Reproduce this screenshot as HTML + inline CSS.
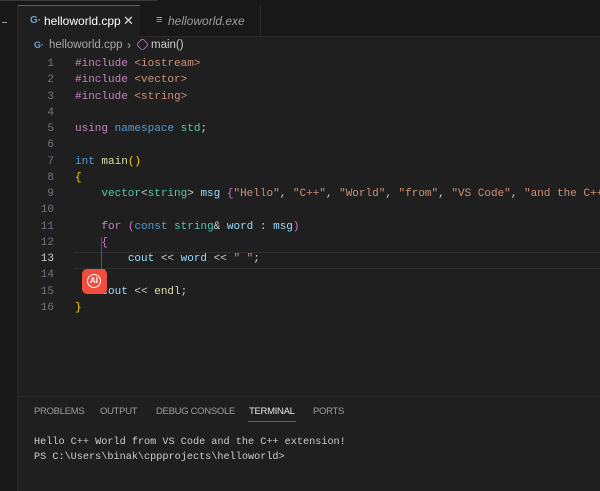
<!DOCTYPE html>
<html><head><style>
body{margin:0;width:600px;height:491px;background:#1f1f1f;overflow:hidden;position:relative;font-family:"Liberation Sans",sans-serif}
.abs{position:absolute}
.mono{font-family:"Liberation Mono","DejaVu Sans Mono",monospace;font-size:11px;white-space:pre}
.code{position:absolute;left:0;top:3px;width:600px;height:320px;overflow:hidden}
.ln{position:absolute;left:30px;width:24px;text-align:right;color:#6e7681}
.cd{position:absolute;left:75px;color:#cccccc}
.p{color:#c586c0}.s{color:#ce9178}.k{color:#569cd6}.t{color:#4ec9b0}.f{color:#dcdcaa}.v{color:#9cdcfe}.y{color:#ffd700}.pu{color:#da70d6}
.pt{position:absolute;top:406px;font-size:9.5px;letter-spacing:-0.3px;color:#9d9d9d}
</style></head><body>
<div class="abs" style="left:0;top:0;width:17px;height:491px;background:#181818;border-right:1px solid #2b2b2b"></div>
<div class="abs" style="left:2px;top:22px;width:5px;height:1px;background:#999"></div>
<div class="abs" style="left:0;top:0;width:600px;height:5px;background:#181818"></div>
<div class="abs" style="left:0;top:0;width:157px;height:1px;background:#3a3a3a"></div>
<div class="abs" style="left:18px;top:5px;width:582px;height:31px;background:#181818;border-bottom:1px solid #2b2b2b"></div>
<div class="abs" style="left:18px;top:5px;width:122px;height:32px;background:#1f1f1f;border-top:1px solid #0078d4;box-sizing:border-box"></div>
<div class="abs" style="left:140px;top:5px;width:120px;height:31px;border-right:1px solid #2b2b2b"></div>
<div class="abs" style="left:30px;top:15px;font-size:10px;color:#6c9fd4;font-weight:bold">G·</div>
<div class="abs" style="left:44px;top:14px;font-size:12px;color:#fff">helloworld.cpp</div>
<div class="abs" style="left:123px;top:13px;font-size:13px;color:#ddd">✕</div>
<div class="abs" style="left:156px;top:14px;font-size:11px;color:#aaa">≡</div>
<div class="abs" style="left:168px;top:14px;font-size:12px;color:#9d9d9d;font-style:italic">helloworld.exe</div>
<div class="abs" style="left:34px;top:40px;font-size:9px;color:#6c9fd4;font-weight:bold">G·</div>
<div class="abs" style="left:49px;top:39px;font-size:11.5px;color:#a9a9a9">helloworld.cpp</div>
<div class="abs" style="left:127px;top:38px;font-size:12px;color:#a9a9a9">›</div>
<div class="abs" style="left:137px;top:39px;width:11px;height:11px;border:1.5px solid #b180d7;border-radius:3px;box-sizing:border-box;transform:rotate(45deg) scale(.85)"></div>
<div class="abs" style="left:151px;top:39px;font-size:11.5px;color:#ccc">main()</div>
<div class="abs" style="left:74px;top:252px;width:526px;height:17px;border-top:1px solid #2e2e2e;border-bottom:1px solid #2e2e2e;box-sizing:border-box"></div>
<div class="abs" style="left:101px;top:237px;width:7px;height:46px;border-left:1px solid #555;box-sizing:border-box"></div>
<div class="mono code">
<div class="ln" style="top:55px">1</div><div class="cd" style="top:55px"><span class="p">#include</span> <span class="s">&lt;iostream&gt;</span></div>
<div class="ln" style="top:71px">2</div><div class="cd" style="top:71px"><span class="p">#include</span> <span class="s">&lt;vector&gt;</span></div>
<div class="ln" style="top:88px">3</div><div class="cd" style="top:88px"><span class="p">#include</span> <span class="s">&lt;string&gt;</span></div>
<div class="ln" style="top:104px">4</div>
<div class="ln" style="top:120px">5</div><div class="cd" style="top:120px"><span class="p">using</span> <span class="k">namespace</span> <span class="t">std</span>;</div>
<div class="ln" style="top:136px">6</div>
<div class="ln" style="top:153px">7</div><div class="cd" style="top:153px"><span class="k">int</span> <span class="f">main</span><span class="y">()</span></div>
<div class="ln" style="top:169px">8</div><div class="cd" style="top:169px"><span class="y">{</span></div>
<div class="ln" style="top:185px">9</div><div class="cd" style="top:185px">    <span class="t">vector</span>&lt;<span class="t">string</span>&gt; <span class="v">msg</span> <span class="pu">{</span><span class="s">"Hello"</span>, <span class="s">"C++"</span>, <span class="s">"World"</span>, <span class="s">"from"</span>, <span class="s">"VS Code"</span>, <span class="s">"and the C++ ext</span></div>
<div class="ln" style="top:201px">10</div>
<div class="ln" style="top:218px">11</div><div class="cd" style="top:218px">    <span class="p">for</span> <span class="pu">(</span><span class="k">const</span> <span class="t">string</span>&amp; <span class="v">word</span> : <span class="v">msg</span><span class="pu">)</span></div>
<div class="ln" style="top:234px">12</div><div class="cd" style="top:234px">    <span class="pu">{</span></div>
<div class="ln" style="top:250px;color:#ccc">13</div><div class="cd" style="top:250px">        <span class="v">cout</span> &lt;&lt; <span class="v">word</span> &lt;&lt; <span class="s">" "</span>;</div>
<div class="ln" style="top:266px">14</div><div class="cd" style="top:266px">    <span class="pu">}</span></div>
<div class="ln" style="top:283px">15</div><div class="cd" style="top:283px">    <span class="v">cout</span> &lt;&lt; <span class="f">endl</span>;</div>
<div class="ln" style="top:299px">16</div><div class="cd" style="top:299px"><span class="y">}</span></div>
</div>
<div class="abs" style="left:82px;top:269px;width:25px;height:25px;background:#ef4e3f;border-radius:5px"></div>
<div class="abs" style="left:87px;top:274px;width:12px;height:12px;border:1.5px solid #fff;border-radius:50%;font-size:8px;color:#fff;font-weight:bold;text-align:center;line-height:12px">AI</div>
<div class="abs" style="left:17px;top:396px;width:583px;height:1px;background:#2b2b2b"></div>
<div class="pt" style="left:34px">PROBLEMS</div>
<div class="pt" style="left:100px">OUTPUT</div>
<div class="pt" style="left:156px">DEBUG CONSOLE</div>
<div class="pt" style="left:249px;color:#e7e7e7">TERMINAL</div>
<div class="abs" style="left:248px;top:421px;width:48px;height:1px;background:#0078d4"></div>
<div class="pt" style="left:313px">PORTS</div>
<div class="mono abs" style="left:34px;top:435px;color:#ccc;line-height:15px;font-size:10.2px">Hello C++ World from VS Code and the C++ extension!
PS C:\Users\binak\cppprojects\helloworld&gt;</div>
</body></html>
